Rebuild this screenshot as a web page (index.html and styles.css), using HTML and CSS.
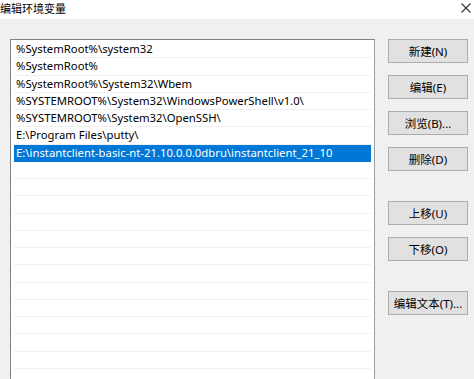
FILE: index.html
```html
<!DOCTYPE html>
<html lang="zh-CN">
<head>
    <meta charset="UTF-8">
    <title>编辑环境变量</title>
    <link rel="stylesheet" href="styles.css">
</head>
<body>
    <div class="titlebar">
        <span class="title">编辑环境变量</span>
        <svg class="close" width="10" height="10" viewBox="0 0 10 10">
            <path d="M0.5 0.5 L9.5 9.5 M9.5 0.5 L0.5 9.5" stroke="#333" stroke-width="1.1" fill="none"/>
        </svg>
    </div>

    <div class="dialog">
        <ul class="path-list">
            <li class="row">%SystemRoot%\system32</li>
            <li class="row">%SystemRoot%</li>
            <li class="row">%SystemRoot%\System32\Wbem</li>
            <li class="row">%SYSTEMROOT%\System32\WindowsPowerShell\v1.0\</li>
            <li class="row">%SYSTEMROOT%\System32\OpenSSH\</li>
            <li class="row">E:\Program Files\putty\</li>
            <li class="row selected">E:\instantclient-basic-nt-21.10.0.0.0dbru\instantclient_21_10</li>
            <li class="row"></li>
            <li class="row"></li>
            <li class="row"></li>
            <li class="row"></li>
            <li class="row"></li>
            <li class="row"></li>
            <li class="row"></li>
            <li class="row"></li>
            <li class="row"></li>
            <li class="row"></li>
            <li class="row"></li>
            <li class="row"></li>
        </ul>

        <div class="actions">
            <button class="btn">新建(N)</button>
            <button class="btn">编辑(E)</button>
            <button class="btn">浏览(B)...</button>
            <button class="btn">删除(D)</button>
            <button class="btn spaced">上移(U)</button>
            <button class="btn">下移(O)</button>
            <button class="btn spaced">编辑文本(T)...</button>
        </div>
    </div>
</body>
</html>
```
FILE: styles.css
```css
:root {
    --window: #f0f0f0;
    --border: #828282;
    --row-line: #f0f0f0;
    --select: #0078d7;
    --btn-bg: #e1e1e1;
    --btn-border: #adadad;
}

html, body {
    height: 379px;
    overflow: hidden;
}

body {
    margin: 0;
    background-color: var(--window);
    font-family: "Noto Sans", "Noto Sans CJK SC", sans-serif;
    font-size: 11.3px;
    color: #000000;
}

.titlebar {
    height: 19px;
    background-color: #ffffff;
    display: flex;
    align-items: center;
    justify-content: space-between;
}

.title {
    font-family: "Noto Sans CJK SC", sans-serif;
    font-size: 11px;
    line-height: 19px;
    margin-top: -2px;
}

.close {
    margin-right: 3px;
    margin-top: -3px;
}

.dialog {
    display: flex;
    align-items: flex-start;
    padding: 20px 0 0 10px;
}

.path-list {
    list-style: none;
    margin: 0;
    width: 365px;
    height: 340px;
    padding: 1px 3px;
    background-color: #ffffff;
    border: 1px solid var(--border);
    border-right-color: #a0a0a0;
    border-bottom: none;
    box-sizing: border-box;
}

.row {
    height: 17.25px;
    line-height: 16px;
    padding-left: 2px;
    border-bottom: 1px solid var(--row-line);
    box-sizing: border-box;
    white-space: nowrap;
    overflow: hidden;
}

.row.selected {
    background-color: var(--select);
    color: #ffffff;
    border-bottom-color: var(--select);
}

.actions {
    display: flex;
    flex-direction: column;
    gap: 12px;
    margin-left: 13px;
    width: 80px;
}

.btn {
    height: 24px;
    width: 80px;
    padding: 0;
    background-color: var(--btn-bg);
    border: 1px solid var(--btn-border);
    font-family: "Noto Sans", "Noto Sans CJK SC", sans-serif;
    font-size: 11.5px;
    color: #000000;
}

.btn.spaced {
    margin-top: 18px;
}
```
